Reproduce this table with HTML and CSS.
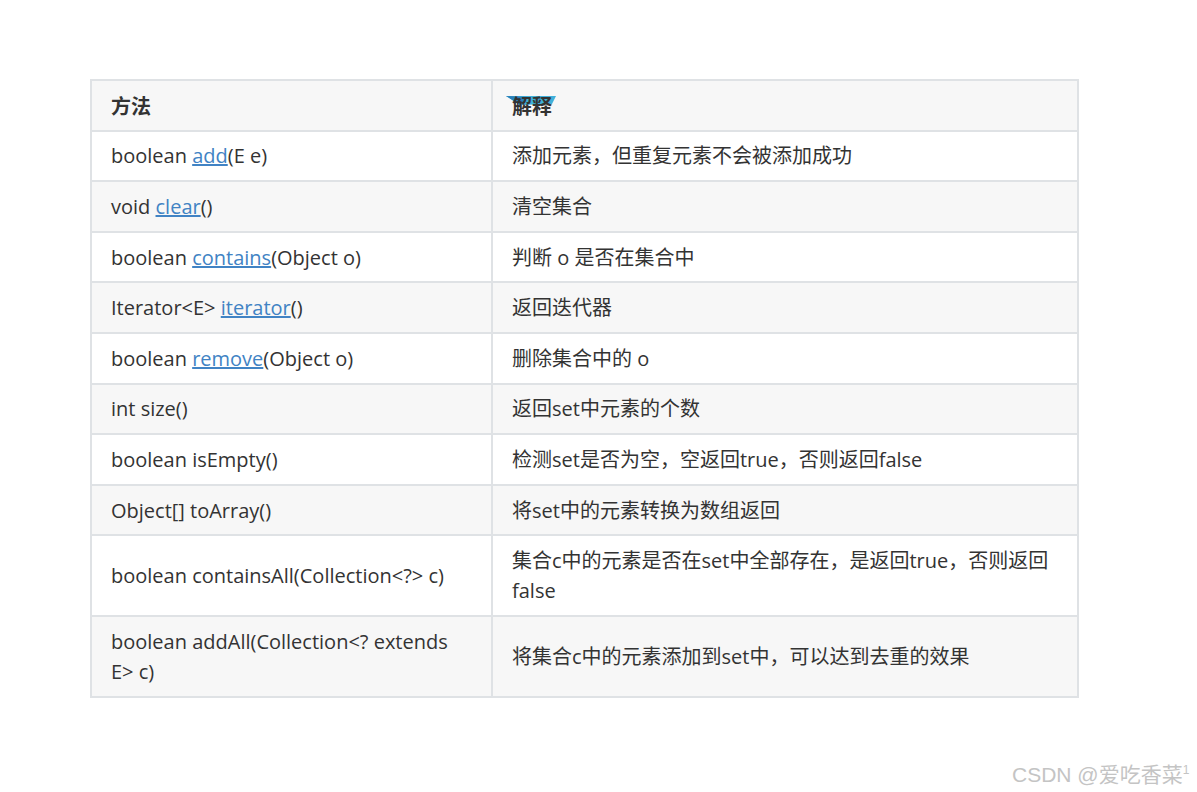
FILE: index.html
```html
<!DOCTYPE html>
<html lang="zh-CN">
<head>
<meta charset="utf-8">
<title>Set 方法</title>
<link rel="stylesheet" href="styles.css">
</head>
<body>
<div class="page">
  <table class="methods">
    <colgroup><col class="c1"><col class="c2"></colgroup>
    <thead>
      <tr><th>方法</th><th class="th2"><svg class="deco" width="52" height="10" viewBox="0 0 52 10"><polygon points="0,0 50,0 46,8 14,9" fill="#3fb0da"/><polygon points="0,0 22,1 14,9" fill="#2a7fb8"/></svg><span class="thtext">解释</span></th></tr>
    </thead>
    <tbody>
      <tr><td>boolean <a href="#">add</a>(E e)</td><td>添加元素，但重复元素不会被添加成功</td></tr>
      <tr><td>void <a href="#">clear</a>()</td><td>清空集合</td></tr>
      <tr><td>boolean <a href="#">contains</a>(Object o)</td><td>判断 o 是否在集合中</td></tr>
      <tr><td>Iterator&lt;E&gt; <a href="#">iterator</a>()</td><td>返回迭代器</td></tr>
      <tr><td>boolean <a href="#">remove</a>(Object o)</td><td>删除集合中的 o</td></tr>
      <tr><td>int size()</td><td>返回set中元素的个数</td></tr>
      <tr><td>boolean isEmpty()</td><td>检测set是否为空，空返回true，否则返回false</td></tr>
      <tr><td>Object[] toArray()</td><td>将set中的元素转换为数组返回</td></tr>
      <tr><td>boolean containsAll(Collection&lt;?&gt; c)</td><td>集合c中的元素是否在set中全部存在，是返回true，否则返回false</td></tr>
      <tr><td>boolean addAll(Collection&lt;? extends E&gt; c)</td><td>将集合c中的元素添加到set中，可以达到去重的效果</td></tr>
    </tbody>
  </table>
  <div class="watermark">CSDN @爱吃香菜<span class="sup">1</span></div>
</div>
</body>
</html>
```

FILE: styles.css
```css
html, body {
  margin: 0;
  padding: 0;
  background: #ffffff;
}
.page {
  position: relative;
  width: 1197px;
  height: 792px;
  overflow: hidden;
  padding-top: 79px;
  padding-left: 90px;
  box-sizing: border-box;
}
.methods {
  border-collapse: collapse;
  width: 987px;
  table-layout: fixed;
  font-family: "Open Sans", "Noto Sans CJK SC", sans-serif;
  font-size: 20px;
  line-height: 30px;
  color: #333333;
}
.c1 { width: 401px; }
.c2 { width: 586px; }
.methods th,
.methods td {
  border: 2px solid #dfe2e5;
  padding: 9.8px 19px 8.8px 19px;
  text-align: left;
  vertical-align: middle;
}
.methods th {
  font-weight: bold;
  background: #f7f7f7;
  padding-top: 10.8px;
  padding-bottom: 7.8px;
}
.th2 {
  position: relative;
}
.deco {
  position: absolute;
  left: 13px;
  top: 15px;
}
.thtext {
  position: relative;
}
.methods tbody tr:nth-child(odd) td { background: #ffffff; }
.methods tbody tr:nth-child(even) td { background: #f7f7f7; }
.methods a {
  color: #4183c4;
  text-decoration: underline;
}
.watermark {
  position: absolute;
  left: 1012px;
  top: 757px;
  font-family: "Liberation Sans", "Noto Sans CJK SC", sans-serif;
  font-size: 21px;
  line-height: 26px;
  color: #c4c4c4;
  white-space: nowrap;
}
.sup {
  font-size: 12px;
  vertical-align: 8px;
}
```
